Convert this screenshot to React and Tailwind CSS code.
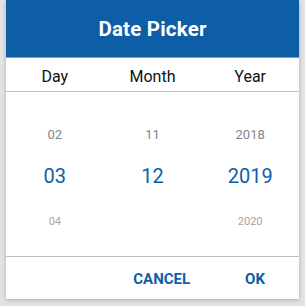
import React from "react";

const cols = [
  { label: "Day", prev: "02", cur: "03", next: "04" },
  { label: "Month", prev: "11", cur: "12", next: "" },
  { label: "Year", prev: "2018", cur: "2019", next: "2020" },
];

export default function App() {
  return (
    <div className="w-[305px] h-[306px] bg-[#e3e3e3] px-[6px] font-['Roboto',sans-serif]">
      <div className="w-[293px] h-[299px] bg-white flex flex-col shadow-[0_1px_4px_rgba(0,0,0,0.25)]">
        {/* header */}
        <div className="h-[58px] bg-[#0d5ea6] flex items-center justify-center border-b border-[#9a9a9a] pt-[2px]">
          <span className="text-white text-[20.5px] font-bold tracking-[0.2px]">Date Picker</span>
        </div>

        {/* labels */}
        <div className="h-[34px] grid grid-cols-3 border-b border-[#c4c4c4] pt-[5px]">
          {cols.map((c) => (
            <div key={c.label} className="flex items-center justify-center text-[16px] text-[#111]">
              {c.label}
            </div>
          ))}
        </div>

        {/* wheels */}
        <div className="h-[165px] grid grid-cols-3 border-b border-[#bdbdbd]">
          {cols.map((c) => (
            <div key={c.label} className="flex flex-col items-center pt-[33px]">
              <div className="h-[20px] flex items-center text-[13px] text-[#858585]">{c.prev}</div>
              <div className="h-[62px] flex items-center text-[20px] text-[#0d5ea6]">{c.cur}</div>
              <div className="h-[14px] mt-[8px] flex items-center text-[11px] text-[#a5a5a5]">{c.next}</div>
            </div>
          ))}
        </div>

        {/* actions */}
        <div className="flex-1 flex items-center justify-end pt-[3px]">
          <button className="text-[15px] font-bold text-[#0d5ea6] mr-[55px]">CANCEL</button>
          <button className="text-[15px] font-bold text-[#0d5ea6] mr-[34px]">OK</button>
        </div>
      </div>
    </div>
  );
}
